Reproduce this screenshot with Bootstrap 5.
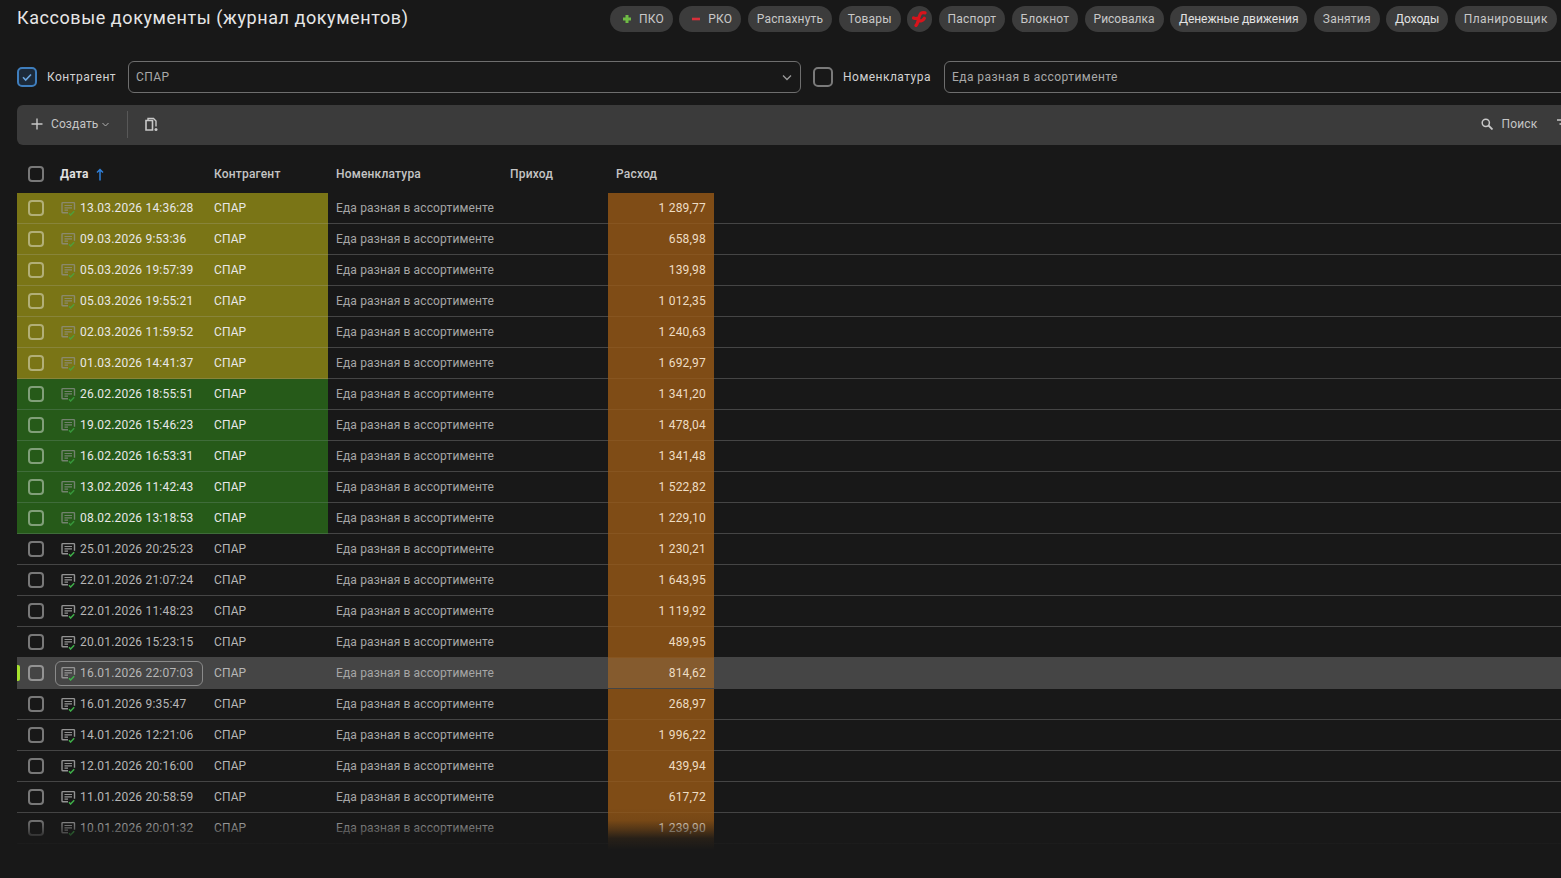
<!DOCTYPE html>
<html lang="ru">
<head>
<meta charset="utf-8">
<title>Кассовые документы</title>
<link href="https://cdn.jsdelivr.net/npm/bootstrap@5.3.0/dist/css/bootstrap.min.css" rel="stylesheet">
<style>
html,body{height:100%;overflow:hidden}
body{background:#181818;color:#c9c9c9;font-family:Roboto,"Liberation Sans",sans-serif;font-size:12px;letter-spacing:.2px;width:1561px}
.page-shell{width:1800px;height:878px;padding-left:17px;position:relative;overflow:hidden}
.head-bar{height:37px;padding-top:6px}
.page-title{flex:0 0 593px;font-size:18px;font-weight:400;color:#e6e6e6;margin:0;line-height:24px;letter-spacing:.57px}
.pills{gap:6.4px}
.pill-btn{height:26px;border-radius:13px;background:#3c3c3c;color:#c8c8c8;font-size:12px;line-height:26px;padding:0 9px;border:0;letter-spacing:.2px;white-space:nowrap}
.pill-btn.strong{color:#e2e2e2;letter-spacing:-.05px}
.pill-btn.tight{letter-spacing:0}
.pill-btn.wide-text{letter-spacing:.4px}
.pill-round{width:25px;padding:0}
.pill-ico{width:10px;height:10px;margin:0 7px 0 3px}
.filter-row{height:32px;margin-top:24px;margin-bottom:12px;width:1700px}
.box-lg{appearance:none;width:20px;height:20px;border:2px solid #7a7a7a;border-radius:5px;background:transparent;flex:none;margin:0}
.box-lg:checked{border-color:#3f7ebd;background:#1c2a3a url("data:image/svg+xml,%3Csvg xmlns='http://www.w3.org/2000/svg' viewBox='0 0 16 16'%3E%3Cpath d='M4 8.3l2.700 2.700L12 5.500' fill='none' stroke='%236ba6e0' stroke-width='1.600'/%3E%3C/svg%3E") center/16px no-repeat}
.filter-label{color:#d2d2d2;margin:0 12px 0 10px;white-space:nowrap;letter-spacing:.47px}
.filter-label.wide{margin-right:13px}
.filter-input{height:32px;background:#181818;border:1px solid #6e6e6e;border-radius:6px;color:#a8a8a8;font-size:12px;padding:0 7px;letter-spacing:.46px;box-shadow:none}
.filter-input:focus{background:#181818;color:#a8a8a8;border-color:#6e6e6e;box-shadow:none}
.sel-wrap{width:673px;margin-right:12px;position:relative;flex:none}
.sel-chev{position:absolute;right:9px;top:13px;width:10px;height:7px}
.text-wrap{width:800px;flex:none}
.tool-bar{height:40px;width:1600px;background:#3b3b3b;border-radius:6px;padding-left:14px;padding-bottom:2px;color:#c5c5c5}
.tool-text{margin-left:8px;letter-spacing:.1px}
.tool-sep{width:1px;height:27px;background:#585858;margin:0 17px 0 18px}
.tool-right{margin-left:1323px}
.tool-find{margin-left:8px}
.tool-filter{margin-left:18px}
.grid-wrap{margin-top:10px;height:695px;width:1544px;position:relative;overflow:hidden}
.doc-table{table-layout:fixed;width:1544px;border-collapse:separate;border-spacing:0;margin:0;--bs-table-bg:transparent;--bs-table-color:#bdbdbd}
.doc-col-check{width:38px}.doc-col-date{width:153px}.doc-col-agent{width:120px}.doc-col-name{width:174px}.doc-col-in,.doc-col-out{width:106px}
.doc-table>thead>tr>th{height:38px;padding:0 8px;font-size:12px;font-weight:500;color:#c4c4c4;border:0;vertical-align:middle;background:transparent;box-shadow:none;letter-spacing:.2px}
.doc-table>thead>tr>th.th-date{color:#e0e0e0;font-weight:700;padding-left:5px}
.doc-table>tbody>tr>td{height:31px;padding:0 8px;border:0;border-bottom:1px solid #454545;vertical-align:middle;background:transparent;color:#a6a6a6;box-shadow:none;white-space:nowrap;overflow:hidden;letter-spacing:.14px}
.doc-table>thead>tr>th.c-check,.doc-table>tbody>tr>td.c-check{padding:0 0 0 11px}
.doc-table>tbody>tr>td.c-date{padding:0 5px 0 0;color:#b6b6b6;letter-spacing:.2px}
.doc-table>thead>tr>th.c-agent,.doc-table>tbody>tr>td.c-agent{padding-left:6px}
.doc-table>tbody>tr>td.c-agent{color:#b6b6b6}
.doc-table>tbody>tr>td.c-sum{background:#7f4c16;color:#eeddc4;text-align:right;border-bottom-color:#875520;letter-spacing:.2px}
.box-sm{appearance:none;display:block;width:16px;height:16px;border:2px solid rgba(255,255,255,.42);border-radius:4px;background:transparent;margin:0}
.date-inner{height:25px;display:flex;align-items:center;padding-left:5px;border:1px solid transparent;border-radius:6px}
.doc-ico{width:15px;height:15px;margin-right:4px;flex:none}
.tone-y>td.tone{background:#7a7516 !important;color:#e8e8e8 !important;border-bottom-color:#88843a !important}
.tone-g>td.tone{background:#265a19 !important;color:#e8e8e8 !important;border-bottom-color:#3f6c3a !important}
.tone-y .doc-ico,.tone-g .doc-ico{opacity:.7}
.row-active>td{background:#454545 !important;border-bottom-color:#454545 !important}
.row-active>td.c-sum{background:#855b2e !important}
.row-active .date-inner{border-color:#8a8a8a}
.row-active>td.c-check{position:relative}
.row-marker{position:absolute;left:0;top:7px;width:3px;height:16px;background:#a6e22e;border-radius:0 2px 2px 0}
.grid-fade{position:absolute;left:0;right:0;bottom:0;height:42px;background:linear-gradient(to bottom,rgba(24,24,24,0) 0%,rgba(24,24,24,.08) 30%,rgba(24,24,24,.45) 52%,rgba(24,24,24,.85) 72%,#181818 100%);pointer-events:none}
</style>
</head>
<body>
<svg width="0" height="0" class="position-absolute">
  <defs>
    <symbol id="doc" viewBox="0 0 15 15">
      <path d="M7 11.800H1.800a.8.8 0 0 1-.8-.8V2.400a.8.8 0 0 1 .8-.8h10.900a.8.8 0 0 1 .8.8v6.400" fill="none" stroke="#939393" stroke-width="1.400"/>
      <path d="M3.500 4.500h7.500M3.500 6.900h7.500M3.500 9.200h3.500" stroke="#939393" stroke-width="1.200"/>
      <path d="M8 12.300l1.600 1.700 3.600-3.800" fill="none" stroke="#3fae49" stroke-width="1.500"/>
    </symbol>
  </defs>
</svg>
<div class="page-shell">
  <header class="head-bar d-flex align-items-start">
    <h1 class="page-title">Кассовые документы (журнал документов)</h1>
    <nav class="pills d-flex">
      <button class="pill-btn d-flex align-items-center"><svg class="pill-ico" viewBox="0 0 10 10"><path d="M5 1v8M1 5h8" stroke="#6fbb45" stroke-width="3"/></svg>ПКО</button>
      <button class="pill-btn d-flex align-items-center"><svg class="pill-ico" viewBox="0 0 10 10"><path d="M1 5h8" stroke="#d7303a" stroke-width="2.600"/></svg>РКО</button>
      <button class="pill-btn">Распахнуть</button>
      <button class="pill-btn">Товары</button>
      <button class="pill-btn pill-round d-flex align-items-center justify-content-center"><svg width="15" height="16" viewBox="0 0 15 16"><path d="M4 14.500c1.400-1.200 1.700-3.300 2.300-5.500S7.800 3 9.200 2.200c1-.6 2.400-.7 3.800-.3M1.500 7c2 .8 3.500.6 5-.2M7.500 10c2 0 3.700-.9 4.800-2.700" fill="none" stroke="#d8141c" stroke-width="3.200" stroke-linecap="round"/></svg></button>
      <button class="pill-btn">Паспорт</button>
      <button class="pill-btn">Блокнот</button>
      <button class="pill-btn tight">Рисовалка</button>
      <button class="pill-btn strong">Денежные движения</button>
      <button class="pill-btn">Занятия</button>
      <button class="pill-btn strong">Доходы</button>
      <button class="pill-btn wide-text">Планировщик</button>
      <button class="pill-btn">&nbsp;&nbsp;&nbsp;</button>
    </nav>
  </header>
  <div class="filter-row d-flex align-items-center">
    <input class="box-lg" type="checkbox" checked aria-label="Контрагент">
    <label class="filter-label">Контрагент</label>
    <div class="sel-wrap">
      <input class="form-control filter-input" value="СПАР" aria-label="Контрагент">
      <svg class="sel-chev" viewBox="0 0 10 7"><path d="M1 1.500l4 4 4-4" fill="none" stroke="#9a9a9a" stroke-width="1.300"/></svg>
    </div>
    <input class="box-lg" type="checkbox" aria-label="Номенклатура">
    <label class="filter-label wide">Номенклатура</label>
    <div class="text-wrap"><input class="form-control filter-input" value="Еда разная в ассортименте" aria-label="Номенклатура"></div>
  </div>
  <div class="tool-bar d-flex align-items-center">
    <svg width="12" height="12" viewBox="0 0 12 12"><path d="M6 .5v11M.5 6h11" stroke="#c8c8c8" stroke-width="1.400"/></svg>
    <span class="tool-text">Создать</span>
    <svg class="ms-1" width="7" height="5" viewBox="0 0 7 5"><path d="M.5 1l3 3 3-3" fill="none" stroke="#b0b0b0" stroke-width="1"/></svg>
    <span class="tool-sep"></span>
    <svg width="13" height="15" viewBox="0 0 13 15"><path d="M3 3V1.500h5.500L11 4v5.500" fill="none" stroke="#c8c8c8" stroke-width="1.400"/><path d="M1 3.500h6.500V13H1z" fill="none" stroke="#c8c8c8" stroke-width="1.600"/><circle cx="11" cy="12.500" r="1.500" fill="#c8c8c8"/></svg>
    <div class="tool-right d-flex align-items-center">
      <svg width="12" height="12" viewBox="0 0 12 12"><circle cx="4.800" cy="4.800" r="3.600" fill="none" stroke="#c8c8c8" stroke-width="1.500"/><path d="M7.500 7.500l4 4" stroke="#c8c8c8" stroke-width="1.800"/></svg>
      <span class="tool-find">Поиск</span>
      <svg class="tool-filter" width="14" height="12" viewBox="0 0 14 12"><path d="M1 2h12M3.500 6h7M6 10h2" stroke="#c8c8c8" stroke-width="1.400"/></svg>
    </div>
  </div>
  <div class="grid-wrap">
    <table class="table doc-table">
      <colgroup><col class="doc-col-check"><col class="doc-col-date"><col class="doc-col-agent"><col class="doc-col-name"><col class="doc-col-in"><col class="doc-col-out"><col></colgroup>
      <thead>
        <tr>
          <th class="c-check"><input class="box-sm" type="checkbox" aria-label="Все"></th>
          <th class="th-date">Дата <svg class="ms-1" width="8" height="13" viewBox="0 0 8 13"><path d="M4 12.500V1.500M1 4.500l3-3 3 3" fill="none" stroke="#2f7fd8" stroke-width="1.500"/></svg></th>
          <th class="c-agent">Контрагент</th>
          <th>Номенклатура</th>
          <th>Приход</th>
          <th>Расход</th>
          <th></th>
        </tr>
      </thead>
      <tbody>
        <tr class="tone-y"><td class="c-check tone"><input class="box-sm" type="checkbox"></td><td class="c-date tone"><div class="date-inner"><svg class="doc-ico"><use href="#doc"/></svg>13.03.2026 14:36:28</div></td><td class="c-agent tone">СПАР</td><td>Еда разная в ассортименте</td><td></td><td class="c-sum">1 289,77</td><td></td></tr>
        <tr class="tone-y"><td class="c-check tone"><input class="box-sm" type="checkbox"></td><td class="c-date tone"><div class="date-inner"><svg class="doc-ico"><use href="#doc"/></svg>09.03.2026 9:53:36</div></td><td class="c-agent tone">СПАР</td><td>Еда разная в ассортименте</td><td></td><td class="c-sum">658,98</td><td></td></tr>
        <tr class="tone-y"><td class="c-check tone"><input class="box-sm" type="checkbox"></td><td class="c-date tone"><div class="date-inner"><svg class="doc-ico"><use href="#doc"/></svg>05.03.2026 19:57:39</div></td><td class="c-agent tone">СПАР</td><td>Еда разная в ассортименте</td><td></td><td class="c-sum">139,98</td><td></td></tr>
        <tr class="tone-y"><td class="c-check tone"><input class="box-sm" type="checkbox"></td><td class="c-date tone"><div class="date-inner"><svg class="doc-ico"><use href="#doc"/></svg>05.03.2026 19:55:21</div></td><td class="c-agent tone">СПАР</td><td>Еда разная в ассортименте</td><td></td><td class="c-sum">1 012,35</td><td></td></tr>
        <tr class="tone-y"><td class="c-check tone"><input class="box-sm" type="checkbox"></td><td class="c-date tone"><div class="date-inner"><svg class="doc-ico"><use href="#doc"/></svg>02.03.2026 11:59:52</div></td><td class="c-agent tone">СПАР</td><td>Еда разная в ассортименте</td><td></td><td class="c-sum">1 240,63</td><td></td></tr>
        <tr class="tone-y"><td class="c-check tone"><input class="box-sm" type="checkbox"></td><td class="c-date tone"><div class="date-inner"><svg class="doc-ico"><use href="#doc"/></svg>01.03.2026 14:41:37</div></td><td class="c-agent tone">СПАР</td><td>Еда разная в ассортименте</td><td></td><td class="c-sum">1 692,97</td><td></td></tr>
        <tr class="tone-g"><td class="c-check tone"><input class="box-sm" type="checkbox"></td><td class="c-date tone"><div class="date-inner"><svg class="doc-ico"><use href="#doc"/></svg>26.02.2026 18:55:51</div></td><td class="c-agent tone">СПАР</td><td>Еда разная в ассортименте</td><td></td><td class="c-sum">1 341,20</td><td></td></tr>
        <tr class="tone-g"><td class="c-check tone"><input class="box-sm" type="checkbox"></td><td class="c-date tone"><div class="date-inner"><svg class="doc-ico"><use href="#doc"/></svg>19.02.2026 15:46:23</div></td><td class="c-agent tone">СПАР</td><td>Еда разная в ассортименте</td><td></td><td class="c-sum">1 478,04</td><td></td></tr>
        <tr class="tone-g"><td class="c-check tone"><input class="box-sm" type="checkbox"></td><td class="c-date tone"><div class="date-inner"><svg class="doc-ico"><use href="#doc"/></svg>16.02.2026 16:53:31</div></td><td class="c-agent tone">СПАР</td><td>Еда разная в ассортименте</td><td></td><td class="c-sum">1 341,48</td><td></td></tr>
        <tr class="tone-g"><td class="c-check tone"><input class="box-sm" type="checkbox"></td><td class="c-date tone"><div class="date-inner"><svg class="doc-ico"><use href="#doc"/></svg>13.02.2026 11:42:43</div></td><td class="c-agent tone">СПАР</td><td>Еда разная в ассортименте</td><td></td><td class="c-sum">1 522,82</td><td></td></tr>
        <tr class="tone-g"><td class="c-check tone"><input class="box-sm" type="checkbox"></td><td class="c-date tone"><div class="date-inner"><svg class="doc-ico"><use href="#doc"/></svg>08.02.2026 13:18:53</div></td><td class="c-agent tone">СПАР</td><td>Еда разная в ассортименте</td><td></td><td class="c-sum">1 229,10</td><td></td></tr>
        <tr><td class="c-check"><input class="box-sm" type="checkbox"></td><td class="c-date"><div class="date-inner"><svg class="doc-ico"><use href="#doc"/></svg>25.01.2026 20:25:23</div></td><td class="c-agent">СПАР</td><td>Еда разная в ассортименте</td><td></td><td class="c-sum">1 230,21</td><td></td></tr>
        <tr><td class="c-check"><input class="box-sm" type="checkbox"></td><td class="c-date"><div class="date-inner"><svg class="doc-ico"><use href="#doc"/></svg>22.01.2026 21:07:24</div></td><td class="c-agent">СПАР</td><td>Еда разная в ассортименте</td><td></td><td class="c-sum">1 643,95</td><td></td></tr>
        <tr><td class="c-check"><input class="box-sm" type="checkbox"></td><td class="c-date"><div class="date-inner"><svg class="doc-ico"><use href="#doc"/></svg>22.01.2026 11:48:23</div></td><td class="c-agent">СПАР</td><td>Еда разная в ассортименте</td><td></td><td class="c-sum">1 119,92</td><td></td></tr>
        <tr><td class="c-check"><input class="box-sm" type="checkbox"></td><td class="c-date"><div class="date-inner"><svg class="doc-ico"><use href="#doc"/></svg>20.01.2026 15:23:15</div></td><td class="c-agent">СПАР</td><td>Еда разная в ассортименте</td><td></td><td class="c-sum">489,95</td><td></td></tr>
        <tr class="row-active"><td class="c-check"><span class="row-marker"></span><input class="box-sm" type="checkbox"></td><td class="c-date"><div class="date-inner"><svg class="doc-ico"><use href="#doc"/></svg>16.01.2026 22:07:03</div></td><td class="c-agent">СПАР</td><td>Еда разная в ассортименте</td><td></td><td class="c-sum">814,62</td><td></td></tr>
        <tr><td class="c-check"><input class="box-sm" type="checkbox"></td><td class="c-date"><div class="date-inner"><svg class="doc-ico"><use href="#doc"/></svg>16.01.2026 9:35:47</div></td><td class="c-agent">СПАР</td><td>Еда разная в ассортименте</td><td></td><td class="c-sum">268,97</td><td></td></tr>
        <tr><td class="c-check"><input class="box-sm" type="checkbox"></td><td class="c-date"><div class="date-inner"><svg class="doc-ico"><use href="#doc"/></svg>14.01.2026 12:21:06</div></td><td class="c-agent">СПАР</td><td>Еда разная в ассортименте</td><td></td><td class="c-sum">1 996,22</td><td></td></tr>
        <tr><td class="c-check"><input class="box-sm" type="checkbox"></td><td class="c-date"><div class="date-inner"><svg class="doc-ico"><use href="#doc"/></svg>12.01.2026 20:16:00</div></td><td class="c-agent">СПАР</td><td>Еда разная в ассортименте</td><td></td><td class="c-sum">439,94</td><td></td></tr>
        <tr><td class="c-check"><input class="box-sm" type="checkbox"></td><td class="c-date"><div class="date-inner"><svg class="doc-ico"><use href="#doc"/></svg>11.01.2026 20:58:59</div></td><td class="c-agent">СПАР</td><td>Еда разная в ассортименте</td><td></td><td class="c-sum">617,72</td><td></td></tr>
        <tr><td class="c-check"><input class="box-sm" type="checkbox"></td><td class="c-date"><div class="date-inner"><svg class="doc-ico"><use href="#doc"/></svg>10.01.2026 20:01:32</div></td><td class="c-agent">СПАР</td><td>Еда разная в ассортименте</td><td></td><td class="c-sum">1 239,90</td><td></td></tr>
        <tr><td class="c-check"></td><td class="c-date"></td><td class="c-agent"></td><td></td><td></td><td class="c-sum"></td><td></td></tr>
      </tbody>
    </table>
    <div class="grid-fade"></div>
  </div>
</div>
<script src="https://cdn.jsdelivr.net/npm/bootstrap@5.3.0/dist/js/bootstrap.bundle.min.js"></script>
</body>
</html>
